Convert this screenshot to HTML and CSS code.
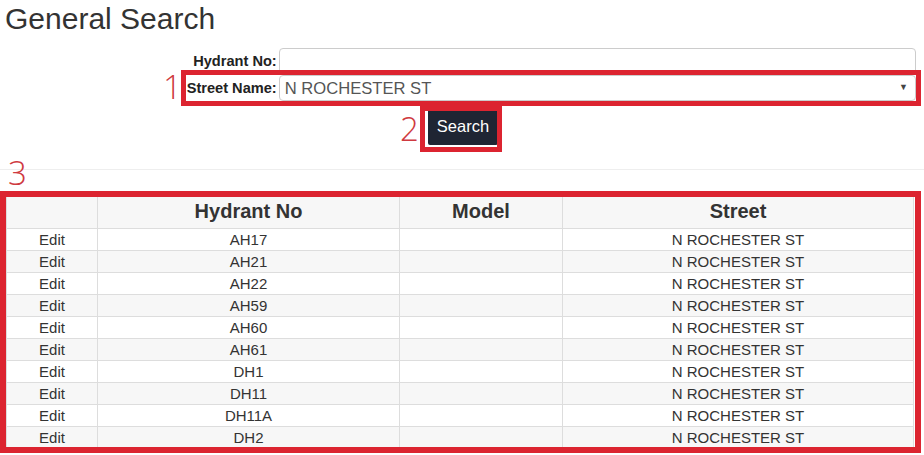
FILE: index.html
```html
<!DOCTYPE html>
<html lang="en">
<head>
    <meta charset="UTF-8">
    <title>General Search</title>
    <link rel="stylesheet" href="styles.css">
</head>
<body>

<div class="page">
    <h1>General Search</h1>

    <div class="search-form">
        <div class="form-row">
            <label for="hydrant">Hydrant No:</label>
            <input type="text" id="hydrant" />
        </div>
        <div class="form-row">
            <label for="street">Street Name:</label>
            <div class="select-wrap">
                <select id="street">
                    <option>N ROCHESTER ST</option>
                </select>
            </div>
        </div>
        <div class="button-row">
            <button>Search</button>
        </div>
    </div>

    <hr>

    <table class="results">
        <thead>
            <tr>
                <th class="col-edit"></th>
                <th class="col-no">Hydrant No</th>
                <th class="col-model">Model</th>
                <th>Street</th>
            </tr>
        </thead>
        <tbody>
            <tr><td>Edit</td><td>AH17</td><td></td><td>N ROCHESTER ST</td></tr>
            <tr><td>Edit</td><td>AH21</td><td></td><td>N ROCHESTER ST</td></tr>
            <tr><td>Edit</td><td>AH22</td><td></td><td>N ROCHESTER ST</td></tr>
            <tr><td>Edit</td><td>AH59</td><td></td><td>N ROCHESTER ST</td></tr>
            <tr><td>Edit</td><td>AH60</td><td></td><td>N ROCHESTER ST</td></tr>
            <tr><td>Edit</td><td>AH61</td><td></td><td>N ROCHESTER ST</td></tr>
            <tr><td>Edit</td><td>DH1</td><td></td><td>N ROCHESTER ST</td></tr>
            <tr><td>Edit</td><td>DH11</td><td></td><td>N ROCHESTER ST</td></tr>
            <tr><td>Edit</td><td>DH11A</td><td></td><td>N ROCHESTER ST</td></tr>
            <tr><td>Edit</td><td>DH2</td><td></td><td>N ROCHESTER ST</td></tr>
        </tbody>
    </table>
</div>

<!-- annotation marks drawn over the screenshot -->
<div class="mark mark-1"></div>
<div class="mark mark-2"></div>
<div class="mark mark-3"></div>
<span class="mark-num num-1">1</span>
<span class="mark-num num-2">2</span>
<span class="mark-num num-3">3</span>

</body>
</html>
```

FILE: styles.css
```css
body {
    font-family: "Liberation Sans", Arial, sans-serif;
    margin: 0;
    padding: 0;
    background: #fff;
    color: #333;
}
.page {
    padding: 0 8px 0 6px;
}
h1 {
    font-size: 30px;
    font-weight: normal;
    line-height: 33px;
    margin: 2px 0 0 -1px;
    color: #333;
}
.search-form {
    margin-top: 13px;
}
.form-row {
    display: flex;
    align-items: center;
    margin-bottom: 1px;
}
.form-row label {
    width: 271px;
    text-align: right;
    font-weight: bold;
    font-size: 14.6px;
    padding-right: 2px;
    color: #222;
}
.form-row input,
.select-wrap {
    width: 638px;
    height: 26px;
    box-sizing: border-box;
}
.form-row input {
    border: 1px solid #ccc;
    border-radius: 4px;
}
.select-wrap {
    position: relative;
}
.select-wrap select {
    width: 100%;
    height: 100%;
    border: 1px solid #ccc;
    border-radius: 4px;
    background: #fff;
    appearance: none;
    -webkit-appearance: none;
    font-family: "Liberation Sans", Arial, sans-serif;
    font-size: 16.6px;
    color: #555;
    padding: 0 5px;
}
.select-wrap::after {
    content: "\25BC";
    position: absolute;
    right: 8px;
    top: 7px;
    font-size: 9px;
    color: #444;
    pointer-events: none;
}
.button-row {
    text-align: center;
    margin-top: 6px;
}
button {
    background: #1f2533;
    color: white;
    border: none;
    width: 70px;
    height: 38px;
    font-family: "Liberation Sans", Arial, sans-serif;
    font-size: 16.5px;
    border-radius: 2px;
    cursor: pointer;
    margin-left: 4px;
}
hr {
    border: none;
    border-top: 1px solid #eee;
    margin: 24px -8px 0 -6px;
}
.results {
    margin-top: 24px;
    width: 908px;
    border-collapse: collapse;
    font-size: 15px;
}
.results th,
.results td {
    border: 1px solid #ddd;
    text-align: center;
    padding: 0;
}
.results th {
    height: 33px;
    font-size: 20px;
    background: #f7f7f7;
}
.results td {
    height: 21px;
}
.results tbody tr:nth-child(even) {
    background: #f7f7f7;
}
.col-edit { width: 90px; }
.col-no { width: 301px; }
.col-model { width: 162px; }

.mark {
    position: absolute;
    border: 5px solid #dc2430;
    box-sizing: border-box;
}
.mark-1 {
    left: 181px;
    top: 70px;
    width: 740px;
    height: 36px;
}
.mark-2 {
    left: 420px;
    top: 106px;
    width: 82px;
    height: 46px;
}
.mark-3 {
    left: 0;
    top: 191px;
    width: 921px;
    height: 262px;
    border-width: 6px;
}
.mark-num {
    position: absolute;
    font-family: "Open Sans", sans-serif;
    font-weight: 300;
    font-size: 33px;
    line-height: 32px;
    color: #cf3a40;
}
.num-1 { left: 163px; top: 71px; }
.num-2 { left: 400px; top: 113px; }
.num-3 { left: 8px; top: 157px; }
```
